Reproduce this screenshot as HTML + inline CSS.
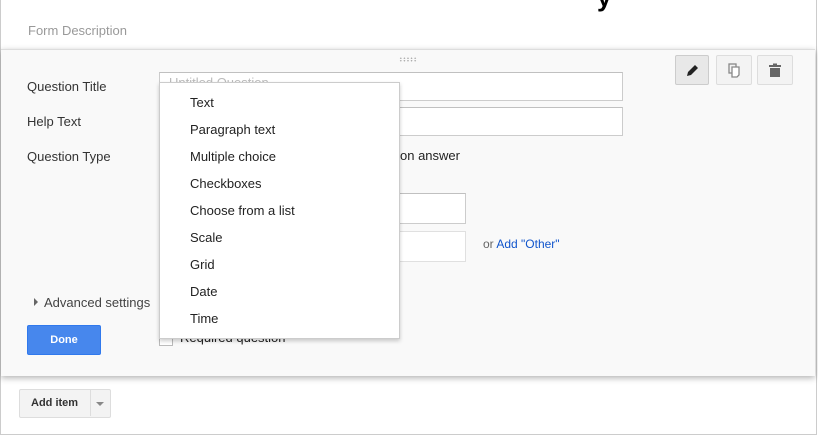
<!DOCTYPE html>
<html><head><style>
body{margin:0;width:818px;height:437px;background:#fff;font-family:"Liberation Sans",Arial,sans-serif;position:relative;overflow:hidden}
.a{position:absolute}
.page{left:0;top:0;width:815px;height:434px;border-left:1px solid #ccc;border-right:1px solid #ccc;border-bottom:1px solid #ccc}
.card{left:1px;top:49px;width:814px;height:326px;background:#f9f9f9;box-shadow:0 2px 6px rgba(0,0,0,.3);border-top:1px solid #ddd}
.lbl{font-size:13px;color:#333}
.inp{background:#fff;border:1px solid #ccc;border-top-color:#c0c0c0}
.btn{background:#f3f3f3;border:1px solid #ddd;border-radius:2px}
.menu{left:159px;top:82px;width:239px;height:255px;background:#fff;border:1px solid #ccc;box-shadow:0 2px 4px rgba(0,0,0,.2)}
.mi{position:absolute;left:30px;font-size:13px;color:#222}
</style></head><body>
<div class="a page"></div>
<div class="a" style="left:597px;top:-18px;font-size:26px;font-weight:bold;color:#000">y</div>
<div class="a" style="left:28px;top:23px;font-size:13px;color:#999">Form Description</div>
<div class="a card"></div>
<div class="a" style="left:399px;top:57px;width:18px;height:5px;background-image:radial-gradient(#aaa 0.8px,transparent 1px);background-size:3.6px 2.5px"></div>
<div class="a lbl" style="left:27px;top:79px">Question Title</div>
<div class="a lbl" style="left:27px;top:114px">Help Text</div>
<div class="a lbl" style="left:27px;top:149px">Question Type</div>
<div class="a inp" style="left:159px;top:72px;width:462px;height:27px;overflow:hidden"><div style="position:absolute;left:9px;top:2px;font-size:13px;color:#bbb">Untitled Question</div></div>
<div class="a inp" style="left:159px;top:107px;width:462px;height:27px"></div>
<div class="a" style="left:400px;top:148px;font-size:13px;color:#222">on answer</div>
<div class="a inp" style="left:300px;top:193px;width:164px;height:29px"></div>
<div class="a inp" style="left:300px;top:231px;width:164px;height:29px;border-color:#e0e0e0"></div>
<div class="a" style="left:483px;top:237px;font-size:12px;color:#666">or <span style="color:#15c">Add "Other"</span></div>
<div class="a btn" style="left:675px;top:55px;width:32px;height:28px;background:#e8e8e8;border-color:#ccc"><svg width="32" height="28"><path d="M11 20l1-4 7-7 3 3-7 7z" fill="#222"/></svg></div>
<div class="a btn" style="left:716px;top:55px;width:34px;height:28px"><svg width="34" height="28"><rect x="12" y="8" width="7" height="9" fill="none" stroke="#888" stroke-width="1.3"/><path d="M15 11h7v8l-2 2h-5z" fill="#fff" stroke="#888" stroke-width="1.3"/></svg></div>
<div class="a btn" style="left:757px;top:55px;width:34px;height:28px"><svg width="34" height="28"><rect x="11" y="9" width="12" height="2" fill="#666"/><rect x="15" y="7.5" width="4" height="2" fill="#666"/><path d="M12 12h10v9h-10z" fill="#666"/></svg></div>
<div class="a" style="left:34px;top:298px;width:0;height:0;border-left:4px solid #666;border-top:4px solid transparent;border-bottom:4px solid transparent"></div>
<div class="a" style="left:44px;top:295px;font-size:13px;color:#444">Advanced settings</div>
<div class="a" style="left:27px;top:325px;width:72px;height:28px;background:#4787ed;border:1px solid #3079ed;border-radius:2px;color:#fff;font-size:11px;font-weight:bold;text-align:center;line-height:28px">Done</div>
<div class="a" style="left:159px;top:332px;width:12px;height:12px;border:1px solid #bbb;background:#fff"></div>
<div class="a" style="left:180px;top:330px;font-size:13px;color:#222">Required question</div>
<div class="a menu">
<div class="mi" style="top:12px">Text</div>
<div class="mi" style="top:39px">Paragraph text</div>
<div class="mi" style="top:66px">Multiple choice</div>
<div class="mi" style="top:93px">Checkboxes</div>
<div class="mi" style="top:120px">Choose from a list</div>
<div class="mi" style="top:147px">Scale</div>
<div class="mi" style="top:174px">Grid</div>
<div class="mi" style="top:201px">Date</div>
<div class="mi" style="top:228px">Time</div>
</div>
<div class="a btn" style="left:19px;top:389px;width:90px;height:27px"></div>
<div class="a" style="left:90px;top:390px;width:1px;height:26px;background:#ddd"></div>
<div class="a" style="left:31px;top:397px;font-size:11px;font-weight:bold;color:#333">Add item</div>
<div class="a" style="left:96px;top:402px;width:0;height:0;border-top:4px solid #888;border-left:4px solid transparent;border-right:4px solid transparent"></div>
</body></html>
